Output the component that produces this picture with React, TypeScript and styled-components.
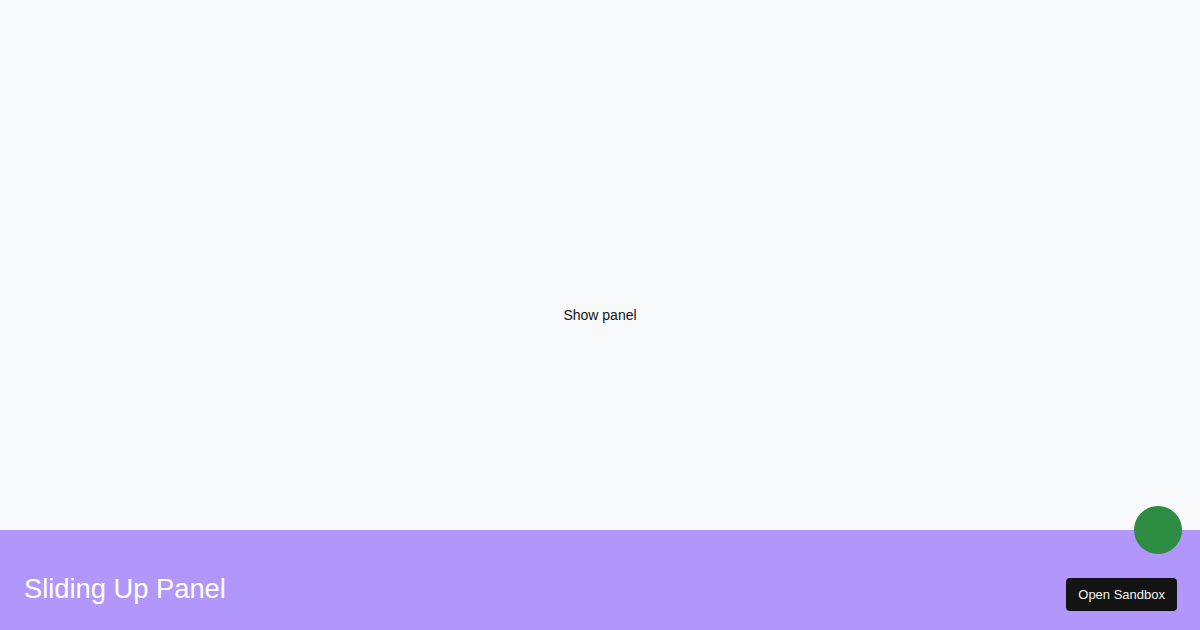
import React from "react";
import styled, { createGlobalStyle } from "styled-components";

const Global = createGlobalStyle`
  html, body { margin: 0; padding: 0; height: 100%; }
  body { background: #f7f9fb; font-family: "Liberation Sans", Arial, sans-serif; }
  #root { height: 100%; }
`;

const Page = styled.div`
  height: 100vh;
  display: flex;
  flex-direction: column;
  overflow: hidden;
`;

const Main = styled.main`
  flex: 1;
  display: flex;
  align-items: center;
  justify-content: center;
  padding-top: 100px;
`;

const ShowButton = styled.button`
  background: none;
  border: none;
  font-family: "Liberation Sans", Arial, sans-serif;
  font-size: 14px;
  color: #111;
  cursor: pointer;
  padding: 0;
`;

const Panel = styled.footer`
  position: relative;
  height: 100px;
  flex-shrink: 0;
  background: #b197fc;
  display: flex;
  align-items: center;
  justify-content: space-between;
  padding: 0 23px 0 24px;
  box-sizing: border-box;
`;

const Title = styled.h1`
  margin: 18px 0 0;
  font-size: 27.3px;
  font-weight: 400;
  color: #ffffff;
  line-height: 32px;
`;

const SandboxButton = styled.button`
  margin-top: 29px;
  height: 33px;
  padding: 0 12px;
  border: none;
  border-radius: 4px;
  background: #141414;
  color: #f2f2f2;
  font-family: "Liberation Sans", Arial, sans-serif;
  font-size: 13px;
  cursor: pointer;
`;

const Fab = styled.div`
  position: absolute;
  top: -24px;
  right: 18px;
  width: 48px;
  height: 48px;
  border-radius: 50%;
  background: #2d8c42;
`;

export default function App() {
  return (
    <>
      <Global />
      <Page>
        <Main>
          <ShowButton>Show panel</ShowButton>
        </Main>
        <Panel>
          <Fab />
          <Title>Sliding Up Panel</Title>
          <SandboxButton>Open Sandbox</SandboxButton>
        </Panel>
      </Page>
    </>
  );
}
